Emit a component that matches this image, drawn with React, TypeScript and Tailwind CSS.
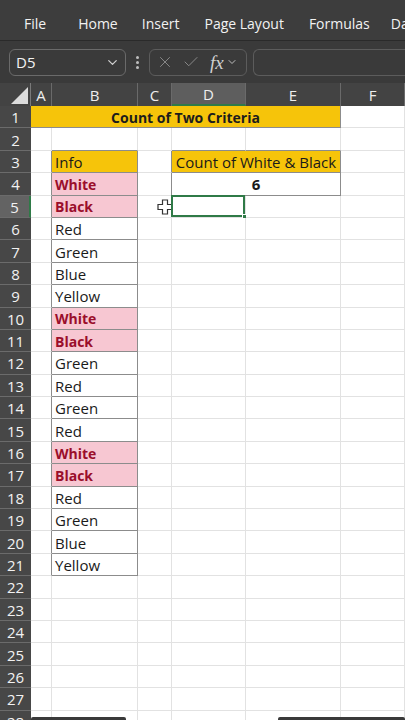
import { ChevronDown, X, Check } from 'lucide-react';

const COLS = ['A', 'B', 'C', 'D', 'E', 'F'];
const ROW_COUNT = 28;

const info: Record<number, string> = {
  3: 'Info',
  4: 'White',
  5: 'Black',
  6: 'Red',
  7: 'Green',
  8: 'Blue',
  9: 'Yellow',
  10: 'White',
  11: 'Black',
  12: 'Green',
  13: 'Red',
  14: 'Green',
  15: 'Red',
  16: 'White',
  17: 'Black',
  18: 'Red',
  19: 'Green',
  20: 'Blue',
  21: 'Yellow',
};

// cells that carry a real (dark) border
const boxed = (r: number, c: number) =>
  (c === 1 && r >= 3 && r <= 21) ||
  ((r === 3 || r === 4) && (c === 3 || c === 4)) ||
  (r === 1 && c <= 4);

interface Span {
  c0: number;
  c1: number;
}

function spansFor(r: number): Span[] {
  if (r === 1) return [{ c0: 0, c1: 4 }, { c0: 5, c1: 5 }];
  if (r === 3 || r === 4)
    return [
      { c0: 0, c1: 0 },
      { c0: 1, c1: 1 },
      { c0: 2, c1: 2 },
      { c0: 3, c1: 4 },
      { c0: 5, c1: 5 },
    ];
  return COLS.map((_, i) => ({ c0: i, c1: i }));
}

function Cell({ r, span }: { r: number; span: Span }) {
  const { c0, c1 } = span;
  const darkRight = boxed(r, c1) || boxed(r, c1 + 1);
  const darkBottom = boxed(r, c0) || boxed(r + 1, c0);
  const spanCls =
    c1 - c0 === 4 ? 'col-span-5' : c1 - c0 === 1 ? 'col-span-2' : 'col-span-1';

  let bg = 'bg-white';
  let content: React.ReactNode = null;
  let textCls = 'text-[#1a1a1a]';
  let align = 'justify-start pl-[3px]';

  if (r === 1 && c0 === 0) {
    bg = 'bg-[#f6c40a]';
    content = 'Count of Two Criteria';
    textCls = 'font-bold text-[#1c1c1c] text-[14px]';
    align = 'justify-center';
  } else if (c0 === 1 && info[r]) {
    const v = info[r];
    content = v;
    if (r === 3) bg = 'bg-[#f6c40a]';
    else if (v === 'White' || v === 'Black') {
      bg = 'bg-[#f7c7d2]';
      textCls = 'font-bold text-[#9a0e2b] text-[14px]';
    }
  } else if (r === 3 && c0 === 3) {
    bg = 'bg-[#f6c40a]';
    content = 'Count of White & Black';
    align = 'justify-center';
  } else if (r === 4 && c0 === 3) {
    content = '6';
    textCls = 'font-bold text-[#1a1a1a]';
    align = 'justify-center';
  }

  return (
    <div
      className={`${spanCls} ${bg} ${align} ${textCls} relative flex items-center pt-[2px] whitespace-nowrap border-r border-b ${
        darkRight ? 'border-r-[#8c8c8c]' : 'border-r-[#e2e2e2]'
      } ${darkBottom ? 'border-b-[#8c8c8c]' : 'border-b-[#e2e2e2]'}`}
    >
      {content}
      {r === 5 && c0 === 3 && (
        <div className="absolute -left-[1px] -top-[1px] right-[0px] bottom-[0px] border-2 border-[#2f7a47]">
          <div className="absolute -right-[4px] -bottom-[4px] w-[5px] h-[5px] bg-[#2f7a47] border border-white" />
        </div>
      )}
      {r === 5 && c0 === 2 && (
        <svg
          className="absolute right-[-2px] top-[3px]"
          width="16"
          height="16"
          viewBox="0 0 16 16"
        >
          <path
            d="M5.5 1h5v4.5H15v5h-4.5V15h-5v-4.5H1v-5h4.5z"
            fill="white"
            stroke="#333"
            strokeWidth="1.2"
          />
        </svg>
      )}
    </div>
  );
}

export default function App() {
  const rows = Array.from({ length: ROW_COUNT }, (_, i) => i + 1);

  return (
    <div
      className="w-[405px] h-[720px] overflow-hidden bg-white relative"
      style={{ fontFamily: '"Open Sans", "Noto Sans", sans-serif' }}
    >
      {/* menu bar */}
      <div className="h-[41px] bg-[#3d3d3d] flex items-center pt-[7px] pl-[24px] text-[14px] text-[#f2f2f2] border-b border-[#2a2a2a] whitespace-nowrap">
        <span>File</span>
        <span className="ml-[32px]">Home</span>
        <span className="ml-[24px]">Insert</span>
        <span className="ml-[25px]">Page Layout</span>
        <span className="ml-[25px]">Formulas</span>
        <span className="ml-[21px]">Data</span>
      </div>

      {/* formula bar */}
      <div className="h-[42px] bg-[#3a3a3a] flex items-center">
        <div className="ml-[9px] w-[117px] h-[27px] border border-[#6a6a6a] rounded-[6px] flex items-center justify-between pl-[6px] pr-[5px] text-[15px] text-[#f2f2f2]">
          <span>D5</span>
          <ChevronDown className="w-[15px] h-[15px] text-[#cfcfcf]" strokeWidth={2} />
        </div>
        <div className="w-[23px] flex flex-col items-center gap-[2px]">
          <span className="w-[3px] h-[3px] rounded-full bg-[#bdbdbd]" />
          <span className="w-[3px] h-[3px] rounded-full bg-[#bdbdbd]" />
          <span className="w-[3px] h-[3px] rounded-full bg-[#bdbdbd]" />
        </div>
        <div className="w-[98px] h-[27px] border border-[#5c5c5c] rounded-[6px] flex items-center pl-[6px] gap-[8px] text-[#8a8a8a]">
          <X className="w-[18px] h-[18px]" strokeWidth={1.3} />
          <Check className="w-[18px] h-[18px]" strokeWidth={1.3} />
          <span
            className="text-[19px] italic text-[#d0d0d0] leading-none ml-[2px]"
            style={{ fontFamily: '"Liberation Serif", "DejaVu Serif", serif' }}
          >
            fx
          </span>
          <ChevronDown className="w-[12px] h-[12px] -ml-[6px] text-[#bdbdbd]" strokeWidth={2} />
        </div>
        <div className="ml-[6px] flex-1 h-[27px] border border-[#5c5c5c] rounded-l-[6px] border-r-0" />
      </div>

      {/* column headers */}
      <div className="grid grid-cols-[31px_21px_86px_34px_74px_95px_1fr] h-[23px] bg-[#434343] text-[15px] leading-none text-[#eeeeee]">
        <div className="relative border-r border-[#7a7a7a]">
          <svg className="absolute left-[11px] top-[4px]" width="17" height="17" viewBox="0 0 17 17">
            <path d="M17 0V17H0z" fill="#dcdcdc" />
          </svg>
        </div>
        {COLS.map((c) => (
          <div
            key={c}
            className={`flex items-center justify-center pt-[2px] border-r border-[#6a6a6a] ${
              c === 'D' ? 'bg-[#5e5e5e] border-b-2 border-b-[#2f7a47]' : ''
            }`}
          >
            {c}
          </div>
        ))}
      </div>

      {/* sheet rows */}
      {rows.map((r) => (
        <div
          key={r}
          className="grid grid-cols-[31px_21px_86px_34px_74px_95px_1fr] grid-rows-[22.4px] h-[22.4px] text-[15px] leading-none"
        >
          <div
            className={`flex items-center justify-center pt-[2px] text-[15px] text-[#f2f2f2] border-b border-[#6b6b6b] ${
              r === 5 ? 'bg-[#636363] border-r-2 border-r-[#2f7a47]' : 'bg-[#474747]'
            }`}
          >
            {r}
          </div>
          {spansFor(r).map((s) => (
            <Cell key={s.c0} r={r} span={s} />
          ))}
        </div>
      ))}

      {/* bottom bars peeking in */}
      <div className="absolute left-[31px] bottom-0 w-[95px] h-[3px] bg-[#3a3a3a] rounded-t-[2px]" />
      <div className="absolute right-0 bottom-0 w-[127px] h-[3px] bg-[#3a3a3a] rounded-t-[2px]" />
    </div>
  );
}
